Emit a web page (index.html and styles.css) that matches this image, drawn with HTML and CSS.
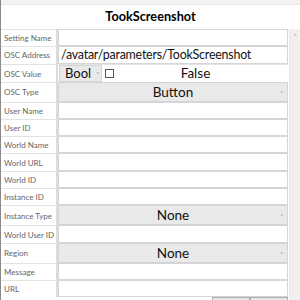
FILE: index.html
```html
<!DOCTYPE html>
<html lang="en">
<head>
	<meta charset="utf-8">
	<title>TookScreenshot</title>
	<link rel="stylesheet" href="styles.css">
</head>
<body>
	<div class="window">
		<div class="topline"></div>
		<h1 class="title">TookScreenshot</h1>
		<div class="content">
			<div class="form">
				<div class="row"><span class="label">Setting Name</span><div class="field text"></div></div>
				<div class="row"><span class="label">OSC Address</span><div class="field text big">/avatar/parameters/TookScreenshot</div></div>
				<div class="row value"><span class="label">OSC Value</span>
					<div class="field plain">
						<div class="combo small">Bool<span class="chev">&#709;</span></div>
						<span class="check"></span>
						<span class="valueText">False</span>
					</div>
				</div>
				<div class="row drop"><span class="label">OSC Type</span><div class="field combo">Button<span class="chev">&#709;</span></div></div>
				<div class="row"><span class="label">User Name</span><div class="field text"></div></div>
				<div class="row"><span class="label">User ID</span><div class="field text"></div></div>
				<div class="row"><span class="label">World Name</span><div class="field text"></div></div>
				<div class="row"><span class="label">World URL</span><div class="field text"></div></div>
				<div class="row"><span class="label">World ID</span><div class="field text"></div></div>
				<div class="row"><span class="label">Instance ID</span><div class="field text"></div></div>
				<div class="row drop"><span class="label">Instance Type</span><div class="field combo">None<span class="chev">&#709;</span></div></div>
				<div class="row"><span class="label">World User ID</span><div class="field text"></div></div>
				<div class="row drop"><span class="label">Region</span><div class="field combo">None<span class="chev">&#709;</span></div></div>
				<div class="row"><span class="label">Message</span><div class="field text"></div></div>
				<div class="row"><span class="label">URL</span><div class="field text"></div></div>
				<div class="buttons">
					<button type="button" class="btn"></button>
					<button type="button" class="btn"></button>
				</div>
			</div>
			<div class="scrollbar"><span class="arrow">&#708;</span></div>
		</div>
	</div>
</body>
</html>
```

FILE: styles.css
```css
* {margin:0; padding:0; box-sizing:border-box;}
html, body {width:300px; height:300px; overflow:hidden; background:#fff;}
body {font-family:Lato, "Open Sans", sans-serif; color:#000;}
.window {height:300px; overflow:hidden; border-left:1px solid #8a8a8a;}
.topline {height:5px; background:#f3f3f3; border-bottom:1px solid #e6e6e6;}
.title {height:24px; line-height:22px; text-align:center; font-size:12.7px; font-weight:bold;}
.content {display:flex;}
.form {flex:1;}
.scrollbar {width:11px; background:#f0f0f0; border-left:1px solid #e8e8e8; margin-left:1px; height:300px; text-align:center;}
.scrollbar .arrow {display:block; margin-top:2px; font-size:8px; color:#aaa;}
.row {display:grid; grid-template-columns:57px 1fr; height:17.3px;}
.row.drop {height:20px;}
.row.value {height:18px;}
.label {display:flex; align-items:center; padding-left:3px; font-size:8px; color:#666; border-top:1px solid #e2e2e2; border-right:2px solid #dcdcdc; white-space:nowrap;}
.field {border:1px solid #d6d6d6; background:#fff;}
.field.big {font-size:12.4px; letter-spacing:-0.2px; line-height:15px; padding-left:2px; color:#111;}
.field.plain {display:flex; align-items:center; border-color:transparent; border-top:1px solid #e2e2e2;}
.combo {position:relative; display:flex; align-items:center; justify-content:center; background:#e9e9e9; border:1px solid #d4d4d4; font-size:13.5px; color:#111;}
.combo .chev {position:absolute; right:4px; top:50%; transform:translateY(-50%); font-size:6px; color:#888;}
.combo.small {width:43px; height:17px; justify-content:flex-start; padding-left:5px; font-size:13px;}
.combo.small .chev {right:2px;}
.check {width:9px; height:9px; margin-left:3px; border:1px solid #555; background:#fff;}
.valueText {flex:1; text-align:center; font-size:13.5px; color:#111; padding-right:10px;}
.buttons {display:flex; justify-content:flex-end;}
.btn {width:38px; height:20px; background:#e6e6e6; border:1px solid #adadad;}
```
